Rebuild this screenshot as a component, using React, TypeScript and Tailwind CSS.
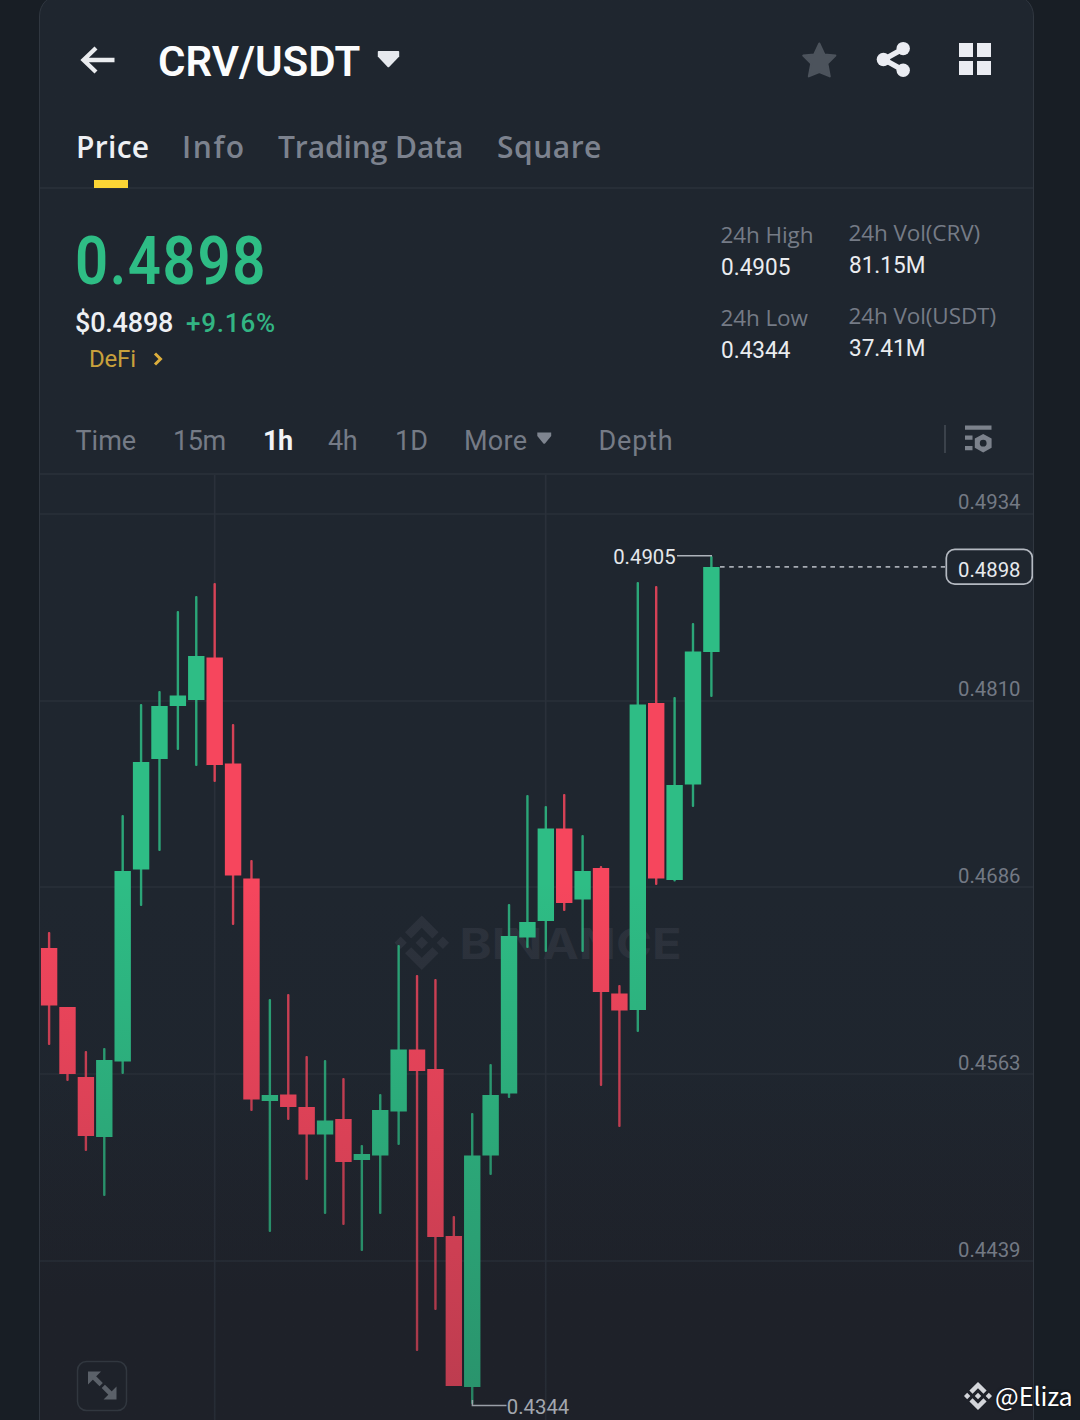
import React from 'react';

const ROBOTO = "font-['Roboto',sans-serif]";
const OPEN = "font-['Open_Sans',sans-serif]";

type Candle = [up: 0 | 1, high: number, top: number, bottom: number, low: number];

const candles: Candle[] = [
  [0, 932, 948, 1005.5, 1045],
  [0, 1007, 1007, 1074, 1081],
  [0, 1051, 1077, 1136, 1151],
  [1, 1048, 1060, 1137, 1196],
  [1, 815, 871, 1061.5, 1074],
  [1, 704, 762, 869.5, 906],
  [1, 691, 706, 759, 851],
  [1, 611, 695.5, 706, 750],
  [1, 596, 656, 700, 766],
  [0, 583, 657.5, 765, 782],
  [0, 724, 763.5, 875.5, 925],
  [0, 860, 878.5, 1099.5, 1111],
  [1, 999, 1095, 1101, 1232],
  [0, 994, 1094.5, 1107, 1120],
  [0, 1056, 1107, 1134.5, 1180],
  [1, 1060, 1120.5, 1134.5, 1214],
  [0, 1078, 1119, 1162, 1225],
  [1, 1145, 1154, 1160, 1251],
  [1, 1094, 1110, 1155.5, 1214],
  [1, 945, 1049.5, 1111.5, 1145],
  [0, 975, 1049.5, 1071, 1351],
  [0, 979, 1069, 1237, 1310],
  [0, 1216, 1236, 1386, 1386],
  [1, 1113, 1155.5, 1387, 1404],
  [1, 1064, 1095, 1155.5, 1175],
  [1, 904, 936, 1093.5, 1098],
  [1, 795, 922, 937.5, 948],
  [1, 806, 828.5, 921, 952],
  [0, 794, 828.5, 903, 911],
  [1, 835, 871, 899.5, 952],
  [0, 866, 868, 992, 1086],
  [0, 985, 993.5, 1010.5, 1127],
  [1, 582, 704.5, 1010, 1032],
  [0, 586, 703, 878.5, 885],
  [1, 697, 785, 880, 881.5],
  [1, 623, 651.5, 784.5, 807],
  [1, 556, 567, 652, 697],
];

const axis: [string, number, number][] = [
  ['0.4934', 514, 509.3],
  ['0.4810', 701, 696],
  ['0.4686', 887, 883.2],
  ['0.4563', 1074, 1070],
  ['0.4439', 1261, 1256.6],
];

/* Diamond logo drawn in a 126.6 unit square */
const LOGO =
  'M38.7 53.2 63.3 28.6 87.9 53.2 102.2 38.9 63.3 0 24.4 38.9ZM0 63.3 14.3 49 28.6 63.3 14.3 77.6ZM38.7 73.4 63.3 98 87.9 73.4 102.2 87.7 63.3 126.6 24.4 87.7ZM98 63.3 112.3 49 126.6 63.3 112.3 77.6ZM77.8 63.3 63.3 48.8 48.8 63.3 63.3 77.8Z';

function Header() {
  return (
    <header className="flex h-[120px] items-start">
      <svg className="ml-[38px] mt-[42px] h-9 w-10 shrink-0" viewBox="78 42 40 36" fill="none" stroke="#eaecef" strokeWidth="4.3">
        <path d="M96 48 83.5 60 96 72M83 60H114.5" />
      </svg>
      <h1 className={`${ROBOTO} ml-[40px] mt-[37px] w-[202px] whitespace-nowrap text-[42px] font-semibold leading-[50px] text-[#fbfcfd]`}>CRV/USDT</h1>
      <svg className="ml-[15px] mt-[48px] h-6 w-7 shrink-0" viewBox="375 48 28 24" fill="#e6e9ee">
        <path d="M378.6 51H398.4Q399.2 51 399.2 51.8V56.6L389.4 66.8Q388.4 67.8 387.4 66.8L377.8 56.6V51.8Q377.8 51 378.6 51Z" />
      </svg>
      <svg className="ml-[396px] mt-[38px] h-11 w-10 shrink-0" viewBox="799 38 40 44" fill="#4c535c" stroke="#4c535c" strokeWidth="2" strokeLinejoin="round">
        <path d="M819.3 43.5 824.4 54.4 835.4 55.6 827.4 63.6 829.8 76.4 819.3 72 808.8 76.4 811.2 63.6 803.2 55.6 814.2 54.4Z" />
      </svg>
      <svg className="ml-[34px] mt-[38px] h-11 w-[42px] shrink-0" viewBox="873 38 42 44" fill="#eaecf2">
        <path d="M903 48.8 884 59.5 903 70.2" fill="none" stroke="#eaecf2" strokeWidth="5.4" />
        <circle cx="883.4" cy="59.5" r="6.7" />
        <circle cx="903.2" cy="48.6" r="6.7" />
        <circle cx="903.2" cy="70.3" r="6.7" />
      </svg>
      <div className="ml-[44px] mt-[43px] grid grid-cols-2 gap-[4px]">
        {[0, 1, 2, 3].map((i) => (
          <span key={i} className="size-[14px] bg-[#eaecf2]" />
        ))}
      </div>
    </header>
  );
}

function Tabs() {
  return (
    <nav className={`${OPEN} flex h-[69px] border-b-2 border-[#272e37] pl-[36px] text-[30px] font-semibold leading-[40px] text-[#7c828e]`}>
      <div className="flex w-[106px] flex-col pt-[7px]">
        <span className="tracking-[0.3px] text-[#eef0f4]">Price</span>
        <span className="ml-[18px] mt-[13px] h-[8px] w-[34px] shrink-0 bg-[#fcd535]" />
      </div>
      <span className="w-[96px] pt-[7px] tracking-[1.6px]">Info</span>
      <span className="w-[219px] whitespace-nowrap pt-[7px] tracking-[-0.1px]">Trading Data</span>
      <span className="pt-[7px] tracking-[0.5px]">Square</span>
    </nav>
  );
}

function Stat({ label, value }: { label: string; value: string }) {
  return (
    <div className="h-[83px]">
      <div className={`${OPEN} whitespace-nowrap text-[22.5px] leading-[32px] tracking-[-0.1px] text-[#757b86]`}>{label}</div>
      <div className={`${ROBOTO} origin-left scale-x-[0.94] text-[24px] leading-[32px] text-[#eaecef]`}>{value}</div>
    </div>
  );
}

function Summary() {
  return (
    <section className="flex h-[217px]">
      <div className={`${ROBOTO} w-[680px]`}>
        <div className="ml-[35px] mt-[37px] origin-left scale-x-[0.88] text-[66px] font-semibold leading-[72px] tracking-[1.8px] text-[#2ebd85]">0.4898</div>
        <div className="ml-[35px] mt-[9px] flex text-[27px] font-medium leading-[32px]">
          <span className="w-[111px] tracking-[-0.2px] text-[#eef0f4]">$0.4898</span>
          <span className="text-[26px] tracking-[0.8px] text-[#32b583]">+9.16%</span>
        </div>
        <div className="ml-[49px] mt-[4px] flex items-center text-[24px] leading-[32px] text-[#c9a13c]">
          <span className="tracking-[-0.2px]">DeFi</span>
          <svg className="ml-[15px] h-4 w-4" viewBox="0 0 16 16" fill="none" stroke="#dcae3c" strokeWidth="3">
            <path d="M4 2.5 9.5 8 4 13.5" />
          </svg>
        </div>
      </div>
      <div className="mt-[30px] w-[128px] pl-[0.5px]">
        <Stat label="24h High" value="0.4905" />
        <Stat label="24h Low" value="0.4344" />
      </div>
      <div className="mt-[28px] pl-[0.5px]">
        <Stat label="24h Vol(CRV)" value="81.15M" />
        <Stat label="24h Vol(USDT)" value="37.41M" />
      </div>
    </section>
  );
}

function Intervals() {
  return (
    <div className={`${ROBOTO} flex h-[69px] border-b-2 border-[#272e37] pl-[35px] pt-[19px] text-[27px] leading-[33px] text-[#757b86]`}>
      <span className="w-[98px] pl-[0.5px]">Time</span>
      <span className="w-[90px] tracking-[-0.4px]">15m</span>
      <span className="w-[65px] font-bold tracking-[-0.4px] text-[#f2f4f7]">1h</span>
      <span className="w-[67px] tracking-[-0.4px]">4h</span>
      <span className="w-[69px]">1D</span>
      <span className="w-[72px] tracking-[0.3px]">More</span>
      <svg className="mt-[5px] h-4 w-4" viewBox="536 430 16 16" fill="#7f8590">
        <path d="M537.3 432.4H551.2V436L545 443.4Q544.2 444.2 543.4 443.4L537.3 436Z" />
      </svg>
      <span className="ml-[46px] w-[346px] pl-[0.5px] tracking-[0.8px]">Depth</span>
      <span className="h-[28px] w-[2px] bg-[#3b424b]" />
      <svg className="ml-[17px] mt-[-3px] h-8 w-8" viewBox="963 422 32 32" fill="#7c828c">
        <path d="M965 425.4H991.5V429.8H965ZM965 435.6H972.5V439.8H965ZM965 446H972.5V450.2H965Z" />
        <path fillRule="evenodd" d="M983.2 434 991.6 438.6V447.8L983.2 452.4 974.8 447.8V438.6ZM983.2 439.8A3.4 3.4 0 1 0 983.2 446.6A3.4 3.4 0 1 0 983.2 439.8Z" />
      </svg>
    </div>
  );
}

function Chart() {
  return (
    <svg className={`${ROBOTO} block h-[945px] w-[993px]`} viewBox="40 475 993 945" fontSize="21">
      <defs>
        <linearGradient id="fade" x1="0" y1="0" x2="0" y2="1">
          <stop offset="0" stopColor="#1e2129" stopOpacity="0" />
          <stop offset="1" stopColor="#1e2129" stopOpacity="0.28" />
        </linearGradient>
      </defs>
      <g stroke="#2a303a" strokeWidth="1.7">
        {axis.map(([t, y]) => (
          <line key={t} x1="40" x2="1033" y1={y} y2={y} />
        ))}
        <line x1="214.7" x2="214.7" y1="475" y2="1420" />
        <line x1="545.7" x2="545.7" y1="475" y2="1420" />
      </g>

      <path d={LOGO} fill="#2c323c" transform="translate(394.5 915.5) scale(0.431)" />
      <text x="459.5" y="958.5" textLength="222" lengthAdjust="spacingAndGlyphs" fill="#2c323c" fontSize="43" fontWeight="700" className="font-['Inter',sans-serif]">BINANCE</text>

      {candles.map(([up, high, top, bottom, low], i) => {
        const x = 49.1 + i * 18.397;
        return (
          <g key={i} fill={up ? '#2ebd85' : '#f6465d'}>
            <rect x={x - 1.2} y={high} width="2.4" height={low - high} rx="1" opacity="0.85" />
            <rect x={x - 8.2} y={top} width="16.4" height={bottom - top} />
          </g>
        );
      })}
      <rect x="40" y="880" width="993" height="540" fill="url(#fade)" />

      {axis.map(([t, , y]) => (
        <text key={t} x="958" y={y} textLength="62.5" lengthAdjust="spacingAndGlyphs" fill="#737984">{t}</text>
      ))}

      <path d="M677 555.8H712" stroke="#aeb3bb" strokeWidth="1.6" />
      <text x="613.2" y="564.3" textLength="62.5" lengthAdjust="spacingAndGlyphs" fill="#e4e7eb">0.4905</text>
      <path d="M472.4 1400V1405.6H506.5" fill="none" stroke="#9a9fa8" strokeWidth="1.5" />
      <text x="506.8" y="1413.5" textLength="62.5" lengthAdjust="spacingAndGlyphs" fill="#a3a7af">0.4344</text>

      <path d="M720 566.8H945" stroke="#a6abb3" strokeWidth="1.8" strokeDasharray="4.6 4.6" />
      <rect x="946.3" y="549.4" width="86" height="34.8" rx="8.5" fill="#1f262f" stroke="#b4b9c1" strokeWidth="1.7" />
      <text x="958" y="577" textLength="62.5" lengthAdjust="spacingAndGlyphs" fill="#e8eaee">0.4898</text>

      <rect x="77.5" y="1361.5" width="49" height="49" rx="9" fill="#1e222a" stroke="#31373f" strokeWidth="1.5" />
      <g fill="#5b6169" stroke="#5b6169">
        <path d="M88 1371.5H101L88 1384.5ZM116.5 1399.5H103.5L116.5 1386.5Z" stroke="none" />
        <path d="M92 1375.5 101.2 1384.7M112.5 1395.5 103.3 1386.3" strokeWidth="4.6" />
      </g>
    </svg>
  );
}

export default function App() {
  return (
    <div className="relative h-[1420px] w-[1080px] overflow-hidden bg-[#181e25]">
      <main className="-mt-[6px] ml-[39px] h-[1450px] w-[995px] rounded-[22px] border border-[#303740] bg-linear-to-b from-[#1f262f] from-75% to-[#1e2129] to-90% pt-[5px]">
        <Header />
        <Tabs />
        <Summary />
        <Intervals />
        <Chart />
      </main>
      <div className="absolute left-[964px] top-[1375px] flex items-center">
        <svg className="mt-px h-[28px] w-[28px]" viewBox="0 0 126.6 126.6" fill="#d3d5da">
          <path d={LOGO} />
        </svg>
        <span className="ml-[3px] whitespace-nowrap font-['Noto_Sans_CJK_SC',sans-serif] text-[25px] leading-[40px] text-white [text-shadow:0_0_3px_rgba(0,0,0,0.6)]">@Eliza</span>
      </div>
    </div>
  );
}
